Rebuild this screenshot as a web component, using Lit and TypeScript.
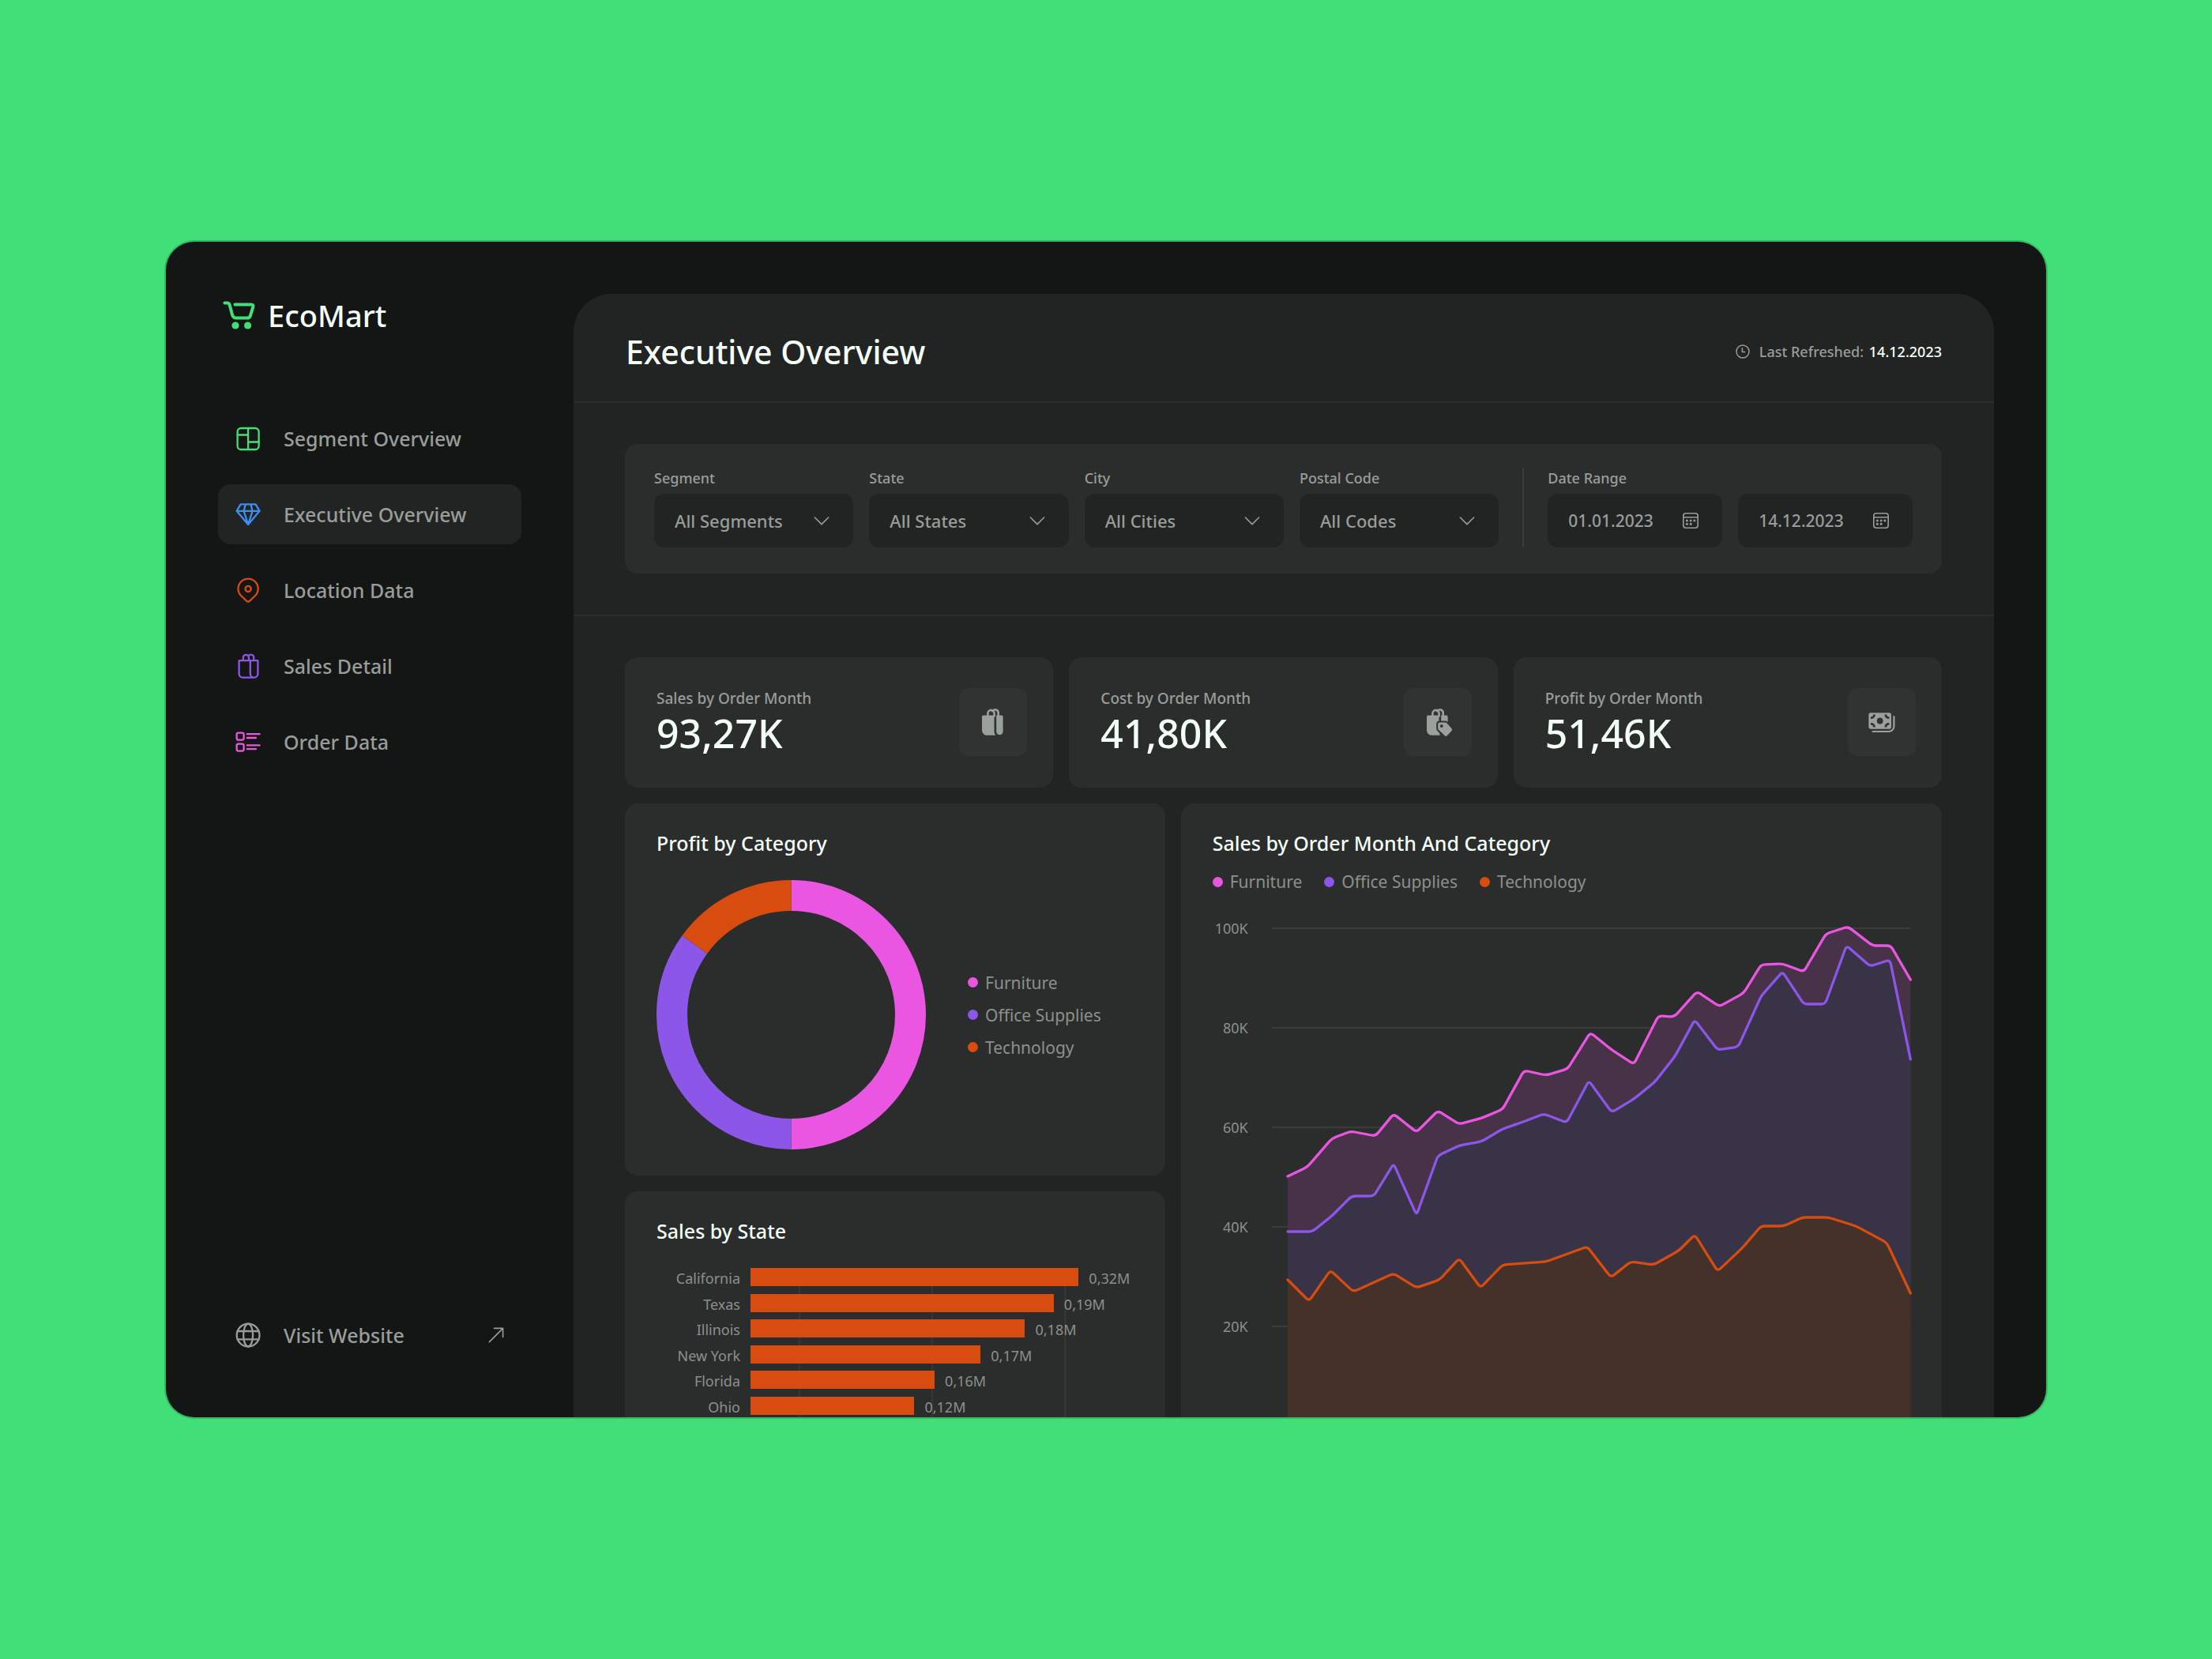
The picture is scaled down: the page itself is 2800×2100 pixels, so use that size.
import { LitElement, html, svg, css, type SVGTemplateResult } from "lit";
import { customElement, state } from "lit/decorators.js";
import { classMap } from "lit/directives/class-map.js";
import { styleMap } from "lit/directives/style-map.js";

type Point = [number, number];

interface NavItem {
  id: string;
  label: string;
  tone: string;
  icon: SVGTemplateResult;
}

interface Category {
  name: string;
  tone: string;
  share: number;
}

const NAV: NavItem[] = [
  {
    id: "segment",
    label: "Segment Overview",
    tone: "green",
    icon: svg`<rect x="2.6" y="3" width="27" height="27" rx="4.5"/><path d="M16.1 3V30M2.6 11.5H16.1M16.1 20.5H29.6"/>`,
  },
  {
    id: "executive",
    label: "Executive Overview",
    tone: "blue",
    icon: svg`<path d="M6.6 3.4H25.6L30.6 11.8L16.1 29L1.6 11.8ZM1.6 11.8H30.6M12.8 3.4L10.6 11.8L16.1 29L21.6 11.8L19.4 3.4"/>`,
  },
  {
    id: "location",
    label: "Location Data",
    tone: "orange",
    icon: svg`<path d="M25.1 23L18.2 29.6a3.1 3.1 0 0 1-4.2 0L7.1 23a12.6 12.6 0 1 1 18 0Z"/><circle cx="16.1" cy="14.4" r="3.6"/>`,
  },
  {
    id: "sales",
    label: "Sales Detail",
    tone: "purple",
    icon: svg`<path d="M4.6 9.2H28.4V26a4.6 4.6 0 0 1-4.6 4.6H9.2A4.6 4.6 0 0 1 4.6 26ZM18.8 9.2V26a4.8 4.8 0 0 0 4.8 4.6M9.8 9.2V5.4a3.6 3.6 0 0 1 7.2 0V9.2M16.4 3.6a3.6 3.6 0 0 1 6.8 1.8V9.2"/>`,
  },
  {
    id: "order",
    label: "Order Data",
    tone: "pink",
    icon: svg`<rect x="1.6" y="4.6" width="9" height="9" rx="2"/><rect x="1.6" y="18.6" width="9" height="9" rx="2"/><path d="M14.8 6.2H30.6M14.8 11H26M14.8 20.4H30.6M14.8 25.2H26"/>`,
  },
];

const CATEGORIES: Category[] = [
  { name: "Furniture", tone: "pink", share: 50 },
  { name: "Office Supplies", tone: "purple", share: 35 },
  { name: "Technology", tone: "orange", share: 15 },
];

const FILTERS = [
  { id: "f-segment", label: "Segment", value: "All Segments" },
  { id: "f-state", label: "State", value: "All States" },
  { id: "f-city", label: "City", value: "All Cities" },
  { id: "f-postal", label: "Postal Code", value: "All Codes" },
];

const BAG_ARCHES = svg`<path class="line" d="M13.4 12.5V9a4.1 4.1 0 0 1 8.2 0V12.5M19.2 6.2a4.1 4.1 0 0 1 7.5 2.8V12.5"/>`;
const BAG_BODY = svg`<path d="M7.6 11.5H21.5V32q0 2.6 1.6 4.8H12.5A6.5 6.5 0 0 1 6 30.3V13.1A1.6 1.6 0 0 1 7.6 11.5ZM24.2 11.5H31A1.6 1.6 0 0 1 32.6 13.1V32a4.2 4.2 0 0 1-8.4 0Z"/>`;

const STATS = [
  {
    label: "Sales by Order Month",
    value: "93,27K",
    icon: svg`${BAG_ARCHES}${BAG_BODY}`,
  },
  {
    label: "Cost by Order Month",
    value: "41,80K",
    icon: svg`${BAG_ARCHES}${BAG_BODY}
      <path class="tag" d="M22.2 20.4H29.4a2.4 2.4 0 0 1 1.7.7L37.4 28a2.4 2.4 0 0 1 0 3.3L32 37a2.4 2.4 0 0 1-3.4 0L20.9 29.8a2.4 2.4 0 0 1-.7-1.7V22.4A2 2 0 0 1 22.2 20.4Z"/>
      <circle class="hole" cx="24.8" cy="25" r="1.9"/>`,
  },
  {
    label: "Profit by Order Month",
    value: "51,46K",
    icon: svg`<rect x="3.4" y="8.3" width="28.6" height="20.4" rx="2.6"/>
      <circle class="hole" cx="17.7" cy="18.5" r="3.9"/>
      <path class="cut" d="M10.4 10.4v.6a3.6 3.6 0 0 1-3.6 3.6H6M25 10.4v.6a3.6 3.6 0 0 0 3.6 3.6h.8M10.4 26.6V26a3.6 3.6 0 0 0-3.6-3.6H6M25 26.6V26a3.6 3.6 0 0 1 3.6-3.6h.8"/>
      <path class="thin" d="M35.4 13.2V25.4a6.6 6.6 0 0 1-6.6 6.6H8.6"/>`,
  },
];

const STATES = [
  { name: "California", value: "0,32M", width: 85.7 },
  { name: "Texas", value: "0,19M", width: 79.2 },
  { name: "Illinois", value: "0,18M", width: 71.7 },
  { name: "New York", value: "0,17M", width: 60.1 },
  { name: "Florida", value: "0,16M", width: 48.1 },
  { name: "Ohio", value: "0,12M", width: 42.8 },
];

const AXIS = ["100K", "80K", "60K", "40K", "20K"];
const PLOT_W = 808;
const PLOT_H = 631;

const SERIES: { tone: string; points: Point[] }[] = [
  {
    tone: "pink",
    points: [
      [20, 314], [45, 302], [76, 266], [100, 257], [131, 263], [154, 235], [183, 258], [210, 231], [237, 248],
      [266, 240], [292, 229], [319, 180], [347, 186], [374, 178], [403, 132], [430, 154], [458, 172], [489, 111],
      [509, 112], [538, 80], [566, 99], [597, 82], [619, 46], [646, 45], [673, 55], [701, 7], [729, -2],
      [760, 22], [783, 22], [808, 65],
    ],
  },
  {
    tone: "purple",
    points: [
      [20, 384], [51, 384], [76, 364], [101, 339], [129, 339], [154, 298], [183, 363], [210, 288], [237, 275],
      [265, 270], [292, 254], [318, 245], [344, 235], [373, 246], [401, 193], [430, 233], [458, 216], [484, 195],
      [510, 162], [535, 116], [564, 154], [590, 150], [619, 86], [646, 55], [673, 96], [700, 96], [727, 22],
      [757, 48], [782, 40], [808, 166],
    ],
  },
  {
    tone: "orange",
    points: [
      [20, 445], [47, 472], [74, 433], [103, 460], [154, 437], [183, 455], [212, 445], [237, 418], [264, 455],
      [292, 426], [347, 422], [399, 403], [429, 442], [454, 422], [483, 426], [515, 408], [535, 388], [564, 434],
      [595, 405], [619, 377], [648, 377], [671, 366], [704, 366], [739, 377], [778, 398], [808, 462],
    ],
  },
];

/** Builds a polyline path whose corners are eased over a few units. */
function softLine(points: Point[], ease = 5): string {
  const toward = (from: Point, to: Point): string => {
    const dx = to[0] - from[0];
    const dy = to[1] - from[1];
    const k = ease / Math.hypot(dx, dy);
    return `${(from[0] + dx * k).toFixed(1)} ${(from[1] + dy * k).toFixed(1)}`;
  };
  let d = `M${points[0].join(" ")}`;
  for (let i = 1; i < points.length - 1; i++) {
    d += `L${toward(points[i], points[i - 1])}Q${points[i].join(" ")} ${toward(points[i], points[i + 1])}`;
  }
  return `${d}L${points[points.length - 1].join(" ")}`;
}

@customElement("app-root")
export class AppRoot extends LitElement {
  static styles = css`
    :host {
      --green: #40df78;
      --blue: #3c8ef2;
      --orange: #d84c0f;
      --purple: #8c56e8;
      --pink: #ea56e2;
      --window: #141615;
      --main: #222423;
      --card: #2b2d2c;
      --tile: #313332;
      --rule: #3a3c3b;
      --muted: #989d9a;
      --soft: #8b908d;
      --bright: #f4fff8;
      display: block;
      font-family: "Noto Sans", "Open Sans", sans-serif;
      font-weight: 500;
      color: var(--muted);
    }
    * {
      box-sizing: border-box;
    }
    h1,
    h2,
    p,
    ul {
      margin: 0;
      padding: 0;
      font-weight: inherit;
    }
    ul {
      list-style: none;
    }
    a {
      color: inherit;
      text-decoration: none;
    }
    svg {
      display: block;
      flex: none;
      fill: none;
      stroke: currentColor;
      stroke-width: 2;
      stroke-linecap: round;
      stroke-linejoin: round;
    }
    .page {
      height: 100vh;
      padding: 306px 7.5vw;
      background: var(--green);
    }
    .window {
      display: flex;
      height: 100%;
      overflow: hidden;
      border-radius: 36px;
      background: var(--window);
      box-shadow: 0 0 0 2px rgb(20 22 21 / 0.2);
    }

    .green { color: var(--green); }
    .blue { color: var(--blue); }
    .orange { color: var(--orange); }
    .purple { color: var(--purple); }
    .pink { color: var(--pink); }

    .sidebar {
      display: flex;
      flex: none;
      flex-direction: column;
      width: 516px;
      padding: 66px;
    }
    .brand {
      display: flex;
      align-items: center;
      gap: 16px;
      height: 54px;
      margin-bottom: 91px;
      padding-left: 6px;
      font-size: 38px;
      color: var(--bright);
    }
    .brand svg {
      width: 41px;
      height: 38px;
      stroke-width: 4;
    }
    .brand circle {
      fill: currentColor;
      stroke: none;
    }
    .nav {
      display: flex;
      flex: 1;
      flex-direction: column;
      gap: 20px;
    }
    .nav-link {
      display: flex;
      align-items: center;
      gap: 28px;
      height: 76px;
      padding: 0 22px;
      border-radius: 16px;
      font-size: 25px;
    }
    .nav-link.active {
      background: var(--main);
    }
    .nav-link svg {
      width: 33px;
      height: 33px;
      stroke-width: 2.3;
    }
    .nav-link .arrow {
      width: 20px;
      height: 20px;
      margin-left: auto;
    }

    .main {
      flex: 1;
      min-width: 0;
      margin: 66px 66px 0 0;
      overflow: hidden;
      border-radius: 48px 48px 0 0;
      background: var(--main);
    }
    .header {
      display: flex;
      align-items: center;
      justify-content: space-between;
      height: 138px;
      padding: 10px 66px 0;
      border-bottom: 2px solid var(--card);
    }
    .header h1 {
      font-size: 41px;
      line-height: 56px;
      color: var(--bright);
    }
    .refreshed {
      display: flex;
      align-items: center;
      gap: 12px;
      font-size: 18px;
      line-height: 28px;
    }
    .refreshed svg {
      width: 18px;
      height: 18px;
      stroke-width: 1.5;
    }
    .refreshed time {
      margin-left: 2px;
      color: var(--bright);
    }

    .filter-band {
      padding: 52px 66px 52px 65px;
      border-bottom: 2px solid var(--card);
    }
    .filters {
      display: grid;
      grid-template-columns: minmax(0, 44fr) 2px minmax(0, 19fr);
      gap: 30px;
      padding: 29px 37px 33px;
      border-radius: 16px;
      background: var(--card);
    }
    .filters .divider {
      background: var(--rule);
    }
    .selects {
      display: grid;
      grid-template-columns: repeat(4, minmax(0, 1fr));
      gap: 20px;
    }
    .field {
      display: flex;
      flex-direction: column;
      gap: 6px;
    }
    .field label {
      font-size: 18px;
      line-height: 28px;
    }
    .dates {
      display: grid;
      grid-template-columns: repeat(2, minmax(0, 1fr));
      gap: 20px;
    }
    .control {
      display: grid;
      align-items: center;
      height: 68px;
      border-radius: 13px;
      background: var(--main);
    }
    .control > * {
      grid-area: 1 / 1;
    }
    .control select,
    .control input {
      width: 100%;
      height: 100%;
      padding: 0 26px;
      border: 0;
      border-radius: 13px;
      appearance: none;
      background: transparent;
      font: inherit;
      font-size: 22px;
      color: inherit;
    }
    .control input {
      font-size: 21px;
    }
    .control svg {
      justify-self: end;
      width: 20px;
      height: 20px;
      margin-right: 30px;
      pointer-events: none;
      stroke-width: 1.6;
    }
    .control .solid {
      fill: currentColor;
      stroke: none;
    }

    .content {
      display: flex;
      flex-direction: column;
      gap: 20px;
      padding: 52px 66px 52px 65px;
    }
    .stats {
      display: grid;
      grid-template-columns: repeat(3, minmax(0, 1fr));
      gap: 20px;
    }
    .stat {
      display: flex;
      align-items: center;
      justify-content: space-between;
      padding: 38px 33px 39px 40px;
      border-radius: 16px;
      background: var(--card);
    }
    .stat-label {
      font-size: 19px;
      line-height: 28px;
    }
    .stat-value {
      font-size: 50px;
      line-height: 60px;
      color: var(--bright);
    }
    .tile {
      display: grid;
      place-items: center;
      width: 86px;
      height: 86px;
      border-radius: 12px;
      background: var(--tile);
      color: #9aa09c;
    }
    .tile svg {
      width: 40px;
      height: 40px;
      fill: currentColor;
      stroke: none;
    }
    .tile .line,
    .tile .thin {
      fill: none;
      stroke: currentColor;
      stroke-width: 2.6;
    }
    .tile .thin {
      stroke-width: 2.2;
    }
    .tile .tag {
      stroke: var(--tile);
      stroke-width: 4;
      paint-order: stroke;
    }
    .tile .hole {
      fill: var(--tile);
    }
    .tile .cut {
      fill: none;
      stroke: var(--tile);
      stroke-width: 2.8;
      stroke-linecap: butt;
    }

    .charts {
      display: grid;
      grid-template-columns: minmax(0, 22fr) minmax(0, 31fr);
      gap: 20px;
    }
    .column {
      display: flex;
      flex-direction: column;
      gap: 20px;
    }
    .panel {
      display: flex;
      flex-direction: column;
      padding: 32px 40px 33px;
      border-radius: 16px;
      background: var(--card);
    }
    .panel.grow {
      flex: 1;
    }
    .panel h2 {
      font-size: 25px;
      line-height: 36px;
      color: var(--bright);
    }
    .legend {
      display: flex;
      gap: 28px;
      font-size: 21px;
      font-weight: 400;
      line-height: 28px;
    }
    .legend.stacked {
      flex-direction: column;
      gap: 13px;
    }
    .legend li {
      display: flex;
      align-items: center;
      gap: 9px;
    }
    .legend span {
      color: var(--soft);
    }
    .legend li::before {
      content: "";
      width: 13px;
      height: 13px;
      border-radius: 50%;
      background: currentColor;
    }
    .donut-row {
      display: flex;
      align-items: center;
      gap: 53px;
      margin-top: 29px;
    }
    .donut {
      width: 341px;
      height: 341px;
      stroke-linecap: butt;
      stroke-width: 39;
    }

    .bars {
      display: grid;
      flex: 1;
      margin-top: 29px;
    }
    .bars > * {
      grid-area: 1 / 1;
    }
    .bar-lines {
      width: calc(100% - 119px);
      height: 100%;
      margin-left: 119px;
      color: var(--rule);
      stroke-width: 1.5;
    }
    .bar-list {
      display: flex;
      flex-direction: column;
      justify-content: space-between;
      height: 186px;
    }
    .bar-item {
      display: grid;
      grid-template-columns: 106px minmax(0, 1fr);
      gap: 13px;
      height: 23px;
      font-size: 18px;
      font-weight: 400;
      line-height: 26px;
      color: var(--soft);
    }
    .bar-name {
      text-align: right;
    }
    .track {
      display: flex;
      gap: 13px;
      white-space: nowrap;
    }
    .bar {
      flex: none;
      height: 23px;
      background: var(--orange);
    }

    .trend .legend {
      margin-top: 17px;
    }
    .plot-row {
      display: flex;
      gap: 30px;
      margin-top: 31px;
    }
    .axis {
      flex: none;
      width: 45px;
      font-size: 18px;
      font-weight: 400;
      line-height: 28px;
      text-align: right;
      color: var(--soft);
    }
    .axis li {
      height: 126px;
    }
    .plot {
      flex: 1;
      min-width: 0;
      height: 631px;
      margin-top: 14px;
      overflow: visible;
    }
    .plot path {
      vector-effect: non-scaling-stroke;
      stroke-width: 3.3;
    }
    .plot .rules {
      color: var(--rule);
      stroke-width: 2;
      stroke-linecap: butt;
    }
    .plot .area {
      stroke: none;
    }
    .area.pink { fill: #473247; }
    .area.purple { fill: #393348; }
    .area.orange { fill: #443129; }
  `;

  @state() private current = "executive";

  private go(event: Event, id: string) {
    event.preventDefault();
    this.current = id;
  }

  private renderSidebar() {
    return html`
      <aside class="sidebar">
        <div class="brand">
          <svg class="green" viewBox="0 0 41 38" aria-hidden="true">
            <path d="M2.4 3.6H5.6Q8 3.6 8.7 6L12 18.6Q13 22.6 17 22.6H30.6Q34 22.6 34.9 19.6L38.2 8.8Q39.2 5.4 35.8 5.4H15.4" />
            <circle cx="16" cy="32" r="4.6" />
            <circle cx="31.6" cy="32" r="4.6" />
          </svg>
          <span>EcoMart</span>
        </div>
        <nav class="nav" aria-label="Main">
          ${NAV.map(
            (item) => html`
              <a
                class=${classMap({ "nav-link": true, active: item.id === this.current })}
                href="#${item.id}"
                @click=${(e: Event) => this.go(e, item.id)}
              >
                <svg class=${item.tone} viewBox="0 0 33 33" aria-hidden="true">${item.icon}</svg>
                <span>${item.label}</span>
              </a>
            `,
          )}
        </nav>
        <a class="nav-link" href="#website">
          <svg viewBox="0 0 33 33" aria-hidden="true">
            <circle cx="16.1" cy="16.1" r="14.4" />
            <ellipse cx="16.1" cy="16.1" rx="6" ry="14.4" />
            <path d="M2.8 11H29.4M2.8 21.4H29.4" />
          </svg>
          <span>Visit Website</span>
          <svg class="arrow" viewBox="0 0 20 20" aria-hidden="true">
            <path d="M1.4 18.6L18.4 1.6M7.6 1.4H18.6V12.4" stroke-width="1.6" />
          </svg>
        </a>
      </aside>
    `;
  }

  private renderDate(id: string, value: string, label?: string) {
    return html`
      <div class="control">
        <input id=${id} type="text" .value=${value} aria-label=${label ?? "Date Range"} />
        <svg viewBox="0 0 20 20" aria-hidden="true">
          <rect x="0.8" y="0.8" width="18.4" height="18.4" rx="3.2" />
          <path d="M0.8 5.8H19.2" />
          <g class="solid">
            <circle cx="5.4" cy="9.9" r="1.5" /><circle cx="10.2" cy="9.9" r="1.5" /><circle cx="14.9" cy="9.9" r="1.5" />
            <circle cx="5.4" cy="14.2" r="1.5" /><circle cx="10.2" cy="14.2" r="1.5" />
          </g>
        </svg>
      </div>
    `;
  }

  private renderFilters() {
    return html`
      <section class="filter-band">
        <form class="filters">
          <div class="selects">
            ${FILTERS.map(
              (f) => html`
                <div class="field">
                  <label for=${f.id}>${f.label}</label>
                  <div class="control">
                    <select id=${f.id}>
                      <option>${f.value}</option>
                    </select>
                    <svg viewBox="0 0 20 20" aria-hidden="true"><path d="M1.4 6L10 14.6L18.6 6" /></svg>
                  </div>
                </div>
              `,
            )}
          </div>
          <div class="divider"></div>
          <div class="field">
            <label for="f-from">Date Range</label>
            <div class="dates">
              ${this.renderDate("f-from", "01.01.2023")} ${this.renderDate("f-to", "14.12.2023", "Date Range end")}
            </div>
          </div>
        </form>
      </section>
    `;
  }

  private renderLegend(stacked = false) {
    return html`
      <ul class=${classMap({ legend: true, stacked })}>
        ${CATEGORIES.map((c) => html`<li class=${c.tone}><span>${c.name}</span></li>`)}
      </ul>
    `;
  }

  private renderDonut() {
    let start = 0;
    return svg`${CATEGORIES.map((c) => {
      const arc = svg`<circle class=${c.tone} cx="170.5" cy="170.5" r="151" pathLength="100"
        stroke-dasharray="${c.share} ${100 - c.share}" stroke-dashoffset=${-start} transform="rotate(-90 170.5 170.5)"/>`;
      start += c.share;
      return arc;
    })}`;
  }

  private renderPlot() {
    return svg`
      <path class="rules" d="M0 0H${PLOT_W}M0 126H${PLOT_W}M0 252H${PLOT_W}M0 378H${PLOT_W}M0 504H${PLOT_W}"/>
      ${SERIES.map((s) => svg`<path class="area ${s.tone}" d="${softLine(s.points)}V${PLOT_H}H20Z"/>`)}
      ${SERIES.map((s) => svg`<path class=${s.tone} d=${softLine(s.points)}></path>`)}
    `;
  }

  render() {
    return html`
      <div class="page">
        <div class="window">
          ${this.renderSidebar()}
          <main class="main">
            <header class="header">
              <h1>Executive Overview</h1>
              <p class="refreshed">
                <svg viewBox="0 0 18 18" aria-hidden="true">
                  <circle cx="9" cy="9" r="8" />
                  <path d="M8.4 4.8V9.4H11.6" />
                </svg>
                <span>Last Refreshed: <time datetime="2023-12-14">14.12.2023</time></span>
              </p>
            </header>
            ${this.renderFilters()}
            <div class="content">
              <section class="stats">
                ${STATS.map(
                  (s) => html`
                    <article class="stat">
                      <div>
                        <p class="stat-label">${s.label}</p>
                        <p class="stat-value">${s.value}</p>
                      </div>
                      <div class="tile"><svg viewBox="0 0 40 40" aria-hidden="true">${s.icon}</svg></div>
                    </article>
                  `,
                )}
              </section>
              <section class="charts">
                <div class="column">
                  <article class="panel">
                    <h2>Profit by Category</h2>
                    <div class="donut-row">
                      <svg class="donut" viewBox="0 0 341 341" aria-hidden="true">${this.renderDonut()}</svg>
                      ${this.renderLegend(true)}
                    </div>
                  </article>
                  <article class="panel grow">
                    <h2>Sales by State</h2>
                    <div class="bars">
                      <svg class="bar-lines" aria-hidden="true">
                        ${["12.8%", "47.5%", "82.2%"].map((x) => svg`<line x1=${x} x2=${x} y1="0" y2="100%"/>`)}
                      </svg>
                      <ul class="bar-list">
                        ${STATES.map(
                          (s) => html`
                            <li class="bar-item">
                              <span class="bar-name">${s.name}</span>
                              <div class="track">
                                <div class="bar" style=${styleMap({ width: `${s.width}%` })}></div>
                                <span>${s.value}</span>
                              </div>
                            </li>
                          `,
                        )}
                      </ul>
                    </div>
                  </article>
                </div>
                <article class="panel trend">
                  <h2>Sales by Order Month And Category</h2>
                  ${this.renderLegend()}
                  <div class="plot-row">
                    <ul class="axis">
                      ${AXIS.map((a) => html`<li>${a}</li>`)}
                    </ul>
                    <svg class="plot" viewBox="0 0 ${PLOT_W} ${PLOT_H}" preserveAspectRatio="none" aria-hidden="true">
                      ${this.renderPlot()}
                    </svg>
                  </div>
                </article>
              </section>
            </div>
          </main>
        </div>
      </div>
    `;
  }
}
